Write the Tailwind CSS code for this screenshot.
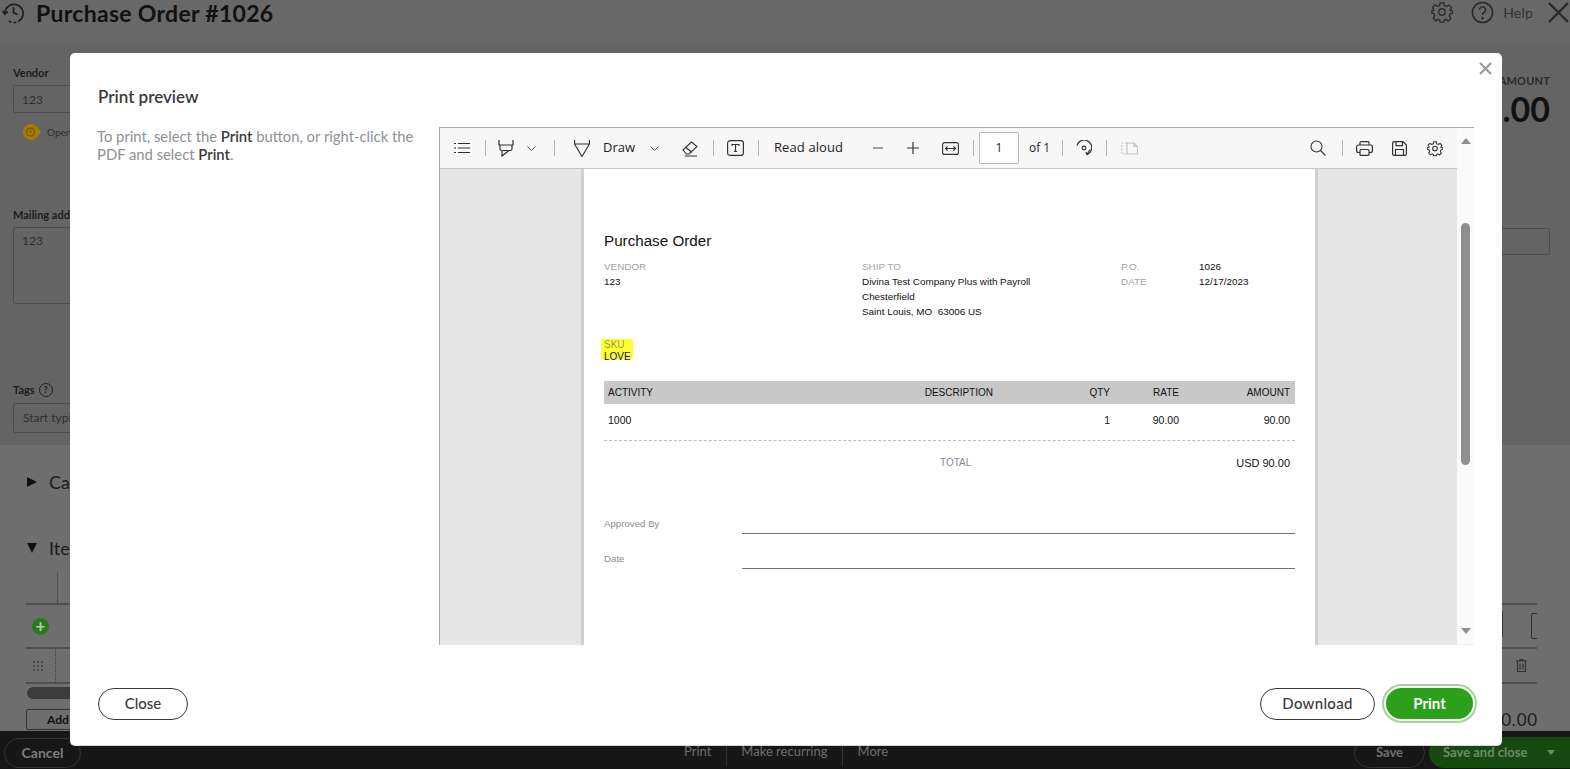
<!DOCTYPE html>
<html lang="en">
<head>
  <meta charset="UTF-8">
  <script src="https://cdn.jsdelivr.net/npm/@tailwindcss/browser@4"></script>
  <title>Print preview</title>
</head>
<body class="w-[1570px] h-[769px] overflow-hidden relative bg-[#646464] font-['Lato',sans-serif]">

  <!-- page behind the dialog (already dimmed) -->
  <div class="h-[769px] flex flex-col">
    <header class="h-[44px] shrink-0 bg-[#686868] flex items-center">
      <svg class="ml-[2px] mt-[-20px] w-[23px] h-[23px]" viewBox="0 0 24 24" fill="none" stroke="#1d1d1d" stroke-width="1.8"><path d="M3 13a9.500 9.500 0 1 1 4 7.700" stroke-dasharray="40 2 3 2 3"/><path d="M12 6.500V12l4 2"/><path d="M0.500 10.500 3 13.500l3-2.500"/></svg>
      <h1 class="ml-[11px] mt-[-19px] text-[23px] leading-[26px] font-bold text-[#111] tracking-[0.3px]">Purchase Order #1026</h1>
      <div class="ml-auto mt-[-20px] flex items-center">
        <svg class="w-[22px] h-[22px]" viewBox="0 0 24 24" fill="none" stroke="#2a2a2a" stroke-width="1.500"><circle cx="12" cy="12" r="3.500"/><path d="M10 2h4l.6 3 2.400 1 2.600-1.600 2.800 2.800L20.800 10l.2 .5 3 .6v2l-3 .9-1 2.400 1.600 2.600-2.800 2.800L16.200 20l-1.600.7L14 23h-4l-.6-2.300-1.600-.7-2.600 1.600-2.800-2.800L4 16.200l-1-2.400-3-.9v-2l3-.6.2-.5-1.600-2.800 2.800-2.800L7 5.800 9.400 5z"/></svg>
        <svg class="ml-[18px] w-[23px] h-[23px]" viewBox="0 0 24 24" fill="none" stroke="#2a2a2a" stroke-width="1.600"><circle cx="12" cy="12" r="10.500"/><path d="M8.800 9.200a3.200 3.200 0 1 1 4.800 2.800c-1 .6-1.600 1.200-1.600 2.500"/><circle cx="12" cy="18" r=".6" fill="#2a2a2a"/></svg>
        <span class="ml-[9px] text-[14px] text-[#333] tracking-[0.2px]">Help</span>
        <svg class="ml-[15px] mr-[1px] w-[21px] h-[21px]" viewBox="0 0 21 21" stroke="#2a2a2a" stroke-width="2.400"><path d="M1 1l19 19M20 1 1 20"/></svg>
      </div>
    </header>

    <section class="h-[401px] shrink-0 bg-[#646464] flex justify-between">
      <div class="w-[300px] pl-[13px] pt-[22px] text-[11px] text-[#1c1c1c]">
        <div class="font-bold leading-[14px]">Vendor</div>
        <div class="mt-[5px] h-[28px] border border-[#4e4e4e] rounded-[2px] pl-[8px] text-[12px] leading-[28px] text-[#2e2e2e]">123</div>
        <div class="mt-[9px] ml-[9px] flex items-center h-[20px]">
          <svg class="w-[20px] h-[18px]" viewBox="0 0 20 18"><path d="M9 1a8 8 0 0 1 5.500 2.200L19 9l-4.500 5.800A8 8 0 1 1 9 1z" fill="#a67c00"/><circle cx="8.500" cy="9" r="4" fill="none" stroke="#6b5208" stroke-width="1.200"/><path d="M8.500 6.500V9l1.500 1" fill="none" stroke="#6b5208"/></svg>
          <span class="ml-[5px] text-[10px] text-[#2c2c2c]">Open</span>
        </div>
        <div class="mt-[66px] font-bold leading-[14px]">Mailing address</div>
        <div class="mt-[5px] h-[77px] border border-[#4e4e4e] rounded-[2px] pl-[8px] pt-[4px] text-[12px] text-[#2e2e2e]">123</div>
        <div class="mt-[79px] flex items-center font-bold leading-[14px]">Tags
          <span class="ml-[4px] w-[14px] h-[14px] rounded-full border border-[#222] text-[9px] leading-[12px] text-center">?</span>
        </div>
        <div class="mt-[6px] h-[30px] border border-[#4e4e4e] rounded-[2px] pl-[9px] text-[12px] leading-[28px] text-[#2e2e2e]">Start typing</div>
      </div>
      <div class="w-[220px] flex flex-col items-end pr-[20px] pt-[30px]">
        <div class="text-[11px] font-bold leading-[14px] text-[#2b2b2b] tracking-[0.2px]">AMOUNT</div>
        <div class="mt-[1px] text-[34px] leading-[40px] font-bold text-[#111]">$90.00</div>
        <div class="mt-[99px] w-[200px] h-[27px] border border-[#4e4e4e] rounded-[2px]"></div>
      </div>
    </section>

    <section class="h-[286px] shrink-0 bg-[#6e6e6e] pl-[27px] relative">
      <div class="pt-[27px] flex items-center text-[18px] leading-[20px] text-[#1c1c1c]">
        <span class="w-0 h-0 border-y-[5px] border-y-transparent border-l-[10px] border-l-[#111]"></span>
        <span class="ml-[12px]">Category details</span>
      </div>
      <div class="mt-[46px] flex items-center text-[18px] leading-[20px] text-[#1c1c1c]">
        <span class="w-0 h-0 border-x-[5px] border-x-transparent border-t-[10px] border-t-[#111]"></span>
        <span class="ml-[12px]">Item details</span>
      </div>
      <div class="mt-[14px] ml-[30px] w-px h-[31px] bg-[#4f4f4f]"></div>
      <div class="ml-[-1px] w-[1511px] h-[46px] border-y-2 border-[#4f4f4f] flex items-center">
        <span class="ml-[6px] w-[17px] h-[17px] rounded-full bg-[#2a7a20] text-[#b8c8b5] text-center font-bold text-[17px] leading-[16px]">+</span>
        <span class="ml-auto w-[6px] h-[26px] border border-r-0 border-[#333] rounded-l-[2px]"></span>
      </div>
      <div class="ml-[-1px] w-[1511px] h-[35px] border-b-2 border-[#4f4f4f] flex items-center">
        <svg class="ml-[7px] w-[10px] h-[10px]" viewBox="0 0 10 10" fill="#4c4c4c"><path d="M0 0h2v2H0zM4 0h2v2H4zM8 0h2v2H8zM0 4h2v2H0zM4 4h2v2H4zM8 4h2v2H8zM0 8h2v2H0zM4 8h2v2H4zM8 8h2v2H8z"/></svg>
        <span class="ml-[12px] h-full border-l border-dotted border-[#3e3e3e]"></span>
        <svg class="ml-auto mr-[10px] w-[11px] h-[13px]" viewBox="0 0 11 13" fill="none" stroke="#333" stroke-width="1.200"><path d="M0 2h11M4 2V.6h3V2M1.500 2v10.500h8V2M4 4.500v6M7 4.500v6"/></svg>
      </div>
      <div class="mt-[3px] w-[200px] h-[12px] rounded-full bg-[#3c3c3c]"></div>
      <div class="mt-[10px] ml-[-1px] flex justify-between pr-[32px]">
        <span class="w-[120px] h-[21px] border border-[#333] rounded-[2px] pl-[20px] text-[12px] font-bold leading-[19px] text-[#111]">Add lines</span>
        <span class="text-[17px] leading-[21px] text-[#1c1c1c] tracking-[0.8px]">$90.00</span>
      </div>
      <div class="absolute right-[67px] top-[166px] w-px h-[26px] bg-[#333]"></div>
    </section>

    <footer class="h-[38px] shrink-0 bg-[#171717] flex relative text-[13px]">
      <span class="ml-[4px] mt-[7px] w-[77px] h-[30px] rounded-full border border-[#333] text-center text-[14px] font-bold leading-[28px] text-[#7d7d7d]">Cancel</span>
      <div class="ml-[603px] flex h-[35px] text-[#6f6f6f]">
        <span class="pr-[15px] leading-[40px] border-r border-[#333]">Print</span>
        <span class="px-[14px] leading-[40px] border-r border-[#333]">Make recurring</span>
        <span class="pl-[15px] leading-[40px]">More</span>
      </div>
      <span class="ml-auto mt-[6px] w-[71px] h-[31px] rounded-full border border-[#333] text-center text-[13px] font-bold leading-[29px] text-[#6f6f6f]">Save</span>
      <span class="ml-[4px] mt-[6px] w-[141px] h-[31px] rounded-l-full bg-[#174a10] flex items-center pl-[14px] text-[13px] font-bold text-[#6d8a68]">Save and close
        <span class="ml-[20px] w-0 h-0 border-x-[4px] border-x-transparent border-t-[5px] border-t-[#6d8a68]"></span>
      </span>
    </footer>
  </div>

  <!-- dialog -->
  <div class="absolute left-[70px] top-[53px] w-[1432px] h-[693px] bg-white rounded-[5px] border-b border-[#d4d7dc] flex flex-col">
    <svg class="absolute right-[10px] top-[9px] w-[13px] h-[13px]" viewBox="0 0 13 13" stroke="#9a9a9a" stroke-width="2.200"><path d="M1 1l11 11M12 1 1 12"/></svg>
    <h2 class="pl-[28px] pt-[33px] text-[17px] leading-[22px] font-semibold text-[#393a3d]">Print preview</h2>
    <div class="mt-[19px] flex h-[518px]">
      <p class="ml-[27px] w-[323px] text-[14.800px] leading-[18px] text-[#8d9096]">To print, select the <b class="font-semibold text-[#393a3d]">Print</b> button, or right-click the PDF and select <b class="font-semibold text-[#393a3d]">Print</b>.</p>

      <!-- pdf viewer -->
      <div class="ml-[19px] w-[1035px] h-[518px] border-t border-l border-[#a9a9a9] border-r-0 flex font-['Liberation_Sans',sans-serif]">
        <div class="w-[1018px] flex flex-col">
          <div class="h-[41px] shrink-0 bg-[#f7f7f7] border-b border-[#c4c4c4] flex items-center text-[13px] text-[#1f1f1f] font-['Open_Sans',sans-serif]">
            <svg class="ml-[13px] w-[18px] h-[12px]" viewBox="0 0 18 12" stroke="#333" stroke-width="1.200"><path d="M5 1.500h12M5 6h12M5 10.500h12M1 1.500h2M1 6h2M1 10.500h2"/></svg>
            <span class="ml-[14px] w-px h-[16px] bg-[#b5b5b5]"></span>
            <svg class="ml-[12px] w-[16px] h-[17px]" viewBox="0 0 16 17" fill="none" stroke="#333" stroke-width="1.200"><path d="M1 0v5h14V0M2 5v4c0 1 1 1.500 2 1.500h8c1 0 2-.5 2-1.500V5M4 10.500V16l7-5.500"/></svg>
            <svg class="ml-[13px] w-[9px] h-[5px]" viewBox="0 0 9 5" fill="none" stroke="#555"><path d="M.5.500 4.500 4.500 8.500.500"/></svg>
            <span class="ml-[18px] w-px h-[16px] bg-[#b5b5b5]"></span>
            <svg class="ml-[19px] w-[16px] h-[17px]" viewBox="0 0 16 17" fill="none" stroke="#333" stroke-width="1.100"><path d="M.6 0v4L8 16.500 15.400 4V0M.6 4h14.800"/></svg>
            <span class="ml-[13px] w-[31px]">Draw</span>
            <svg class="ml-[16px] w-[9px] h-[5px]" viewBox="0 0 9 5" fill="none" stroke="#555"><path d="M.5.500 4.500 4.500 8.500.500"/></svg>
            <svg class="ml-[23px] w-[16px] h-[17px]" viewBox="0 0 16 17" fill="none" stroke="#333" stroke-width="1.100"><path d="M1 10 9.500 2 15 6.500 7 14H4.500zM4 7.500 10 12.500M3 16h12"/></svg>
            <span class="ml-[15px] w-px h-[16px] bg-[#b5b5b5]"></span>
            <svg class="ml-[13px] w-[17px] h-[16px]" viewBox="0 0 17 16" fill="none" stroke="#333" stroke-width="1.200"><rect x=".6" y=".6" width="15.800" height="14.800" rx="2.500"/><path d="M5 6V4.500h7V6M8.500 4.500v7M7 11.500h3"/></svg>
            <span class="ml-[14px] w-px h-[16px] bg-[#b5b5b5]"></span>
            <span class="ml-[15px] w-[69px] whitespace-nowrap tracking-[0.1px]">Read aloud</span>
            <svg class="ml-[30px] w-[10px] h-[2px]" viewBox="0 0 10 2" stroke="#777" stroke-width="1.400"><path d="M0 1h10"/></svg>
            <svg class="ml-[24px] w-[12px] h-[12px]" viewBox="0 0 12 12" stroke="#333" stroke-width="1.200"><path d="M0 6h12M6 0v12"/></svg>
            <svg class="ml-[23px] w-[17px] h-[13px]" viewBox="0 0 17 13" fill="none" stroke="#333" stroke-width="1.100"><rect x=".6" y=".6" width="15.800" height="11.800" rx="2"/><path d="M3.500 6.500h10M5.500 4.500l-2 2 2 2M11.500 4.500l2 2-2 2"/></svg>
            <span class="ml-[14px] w-px h-[16px] bg-[#b5b5b5]"></span>
            <span class="ml-[5px] w-[40px] h-[32px] bg-white border border-[#bcbcbc] rounded-[2px] text-center text-[12px] leading-[30px]">1</span>
            <span class="ml-[10px] w-[20px] text-[12px] whitespace-nowrap">of 1</span>
            <span class="ml-[13px] w-px h-[16px] bg-[#b5b5b5]"></span>
            <svg class="ml-[13px] w-[16px] h-[17px]" viewBox="0 0 16 17" fill="none" stroke="#333" stroke-width="1.200"><path d="M1 5.500A7.500 7.500 0 1 1 11 14.500"/><path d="M14 9.500 11 14.500l-1-2.500"/><circle cx="8" cy="8" r="1.800"/></svg>
            <span class="ml-[14px] w-px h-[16px] bg-[#b5b5b5]"></span>
            <svg class="ml-[14px] w-[17px] h-[13px]" viewBox="0 0 17 13" fill="none" stroke="#c2c2c2" stroke-width="1.100"><path d="M6 1H1v11h5" stroke-dasharray="2 1.500"/><path d="M6 1h7l3.500 3.500V12H6zM13 1v3.500h3.500"/></svg>
            <svg class="ml-[172px] w-[16px] h-[16px]" viewBox="0 0 16 16" fill="none" stroke="#333" stroke-width="1.100"><circle cx="6.500" cy="6.500" r="5.500"/><path d="M10.500 10.500 15.500 15.500"/></svg>
            <span class="ml-[16px] w-px h-[16px] bg-[#b5b5b5]"></span>
            <svg class="ml-[13px] w-[17px] h-[15px]" viewBox="0 0 17 15" fill="none" stroke="#333" stroke-width="1.200"><path d="M4 4V1.500C4 1 4.500.6 5 .6h7c.5 0 1 .4 1 .9V4M4 11.500H2.500C1.500 11.500.6 10.800.6 9.500V6C.6 4.800 1.500 4 2.500 4h12c1 0 1.900.8 1.900 2v3.500c0 1.300-.9 2-1.900 2H13"/><rect x="4" y="8.500" width="9" height="5.900" rx="1"/></svg>
            <svg class="ml-[19px] w-[15px] h-[15px]" viewBox="0 0 15 15" fill="none" stroke="#333" stroke-width="1.200"><path d="M2 .6h9L14.400 4v9c0 .8-.6 1.400-1.400 1.400H2c-.8 0-1.400-.6-1.400-1.400V2C.6 1.200 1.200.6 2 .6zM4 .6v4h6.500v-4M3.500 14.400V8.500h8v5.900"/></svg>
            <svg class="ml-[20px] w-[16px] h-[17px]" viewBox="0 0 24 24" fill="none" stroke="#333" stroke-width="1.600"><circle cx="12" cy="12" r="3.500"/><path d="M10 2h4l.6 3 2.400 1 2.600-1.600 2.800 2.800L20.800 10l.2 .5 3 .6v2l-3 .9-1 2.400 1.600 2.600-2.800 2.800L16.200 20l-1.600.7L14 23h-4l-.6-2.300-1.600-.7-2.600 1.600-2.800-2.800L4 16.200l-1-2.400-3-.9v-2l3-.6.2-.5-1.600-2.800 2.800-2.800L7 5.800 9.400 5z"/></svg>
          </div>

          <div class="flex-1 bg-[#e6e6e6] pl-[141px] overflow-hidden">
            <div class="w-[737px] h-full bg-white border-x-[3px] border-[#cfcfcf] pl-[20px] pr-[20px] text-[10px] text-[#111]">
              <div class="pt-[63px] text-[15.200px] leading-[18px]">Purchase Order</div>
              <div class="mt-[9px] grid grid-cols-[258px_259px_78px_1fr] leading-[15px] text-[9.900px]">
                <div><div class="text-[#a0a4aa]">VENDOR</div><div>123</div></div>
                <div><div class="text-[#a0a4aa]">SHIP TO</div><div>Divina Test Company Plus with Payroll</div><div>Chesterfield</div><div>Saint Louis, MO&nbsp; 63006 US</div></div>
                <div><div class="text-[#a0a4aa]">P.O.</div><div class="text-[#a0a4aa]">DATE</div></div>
                <div><div>1026</div><div>12/17/2023</div></div>
              </div>
              <div class="mt-[20px] ml-[-3px] w-[32px] h-[20px] bg-[#ffff33] pl-[3px] leading-[12px] rounded-[1px]">
                <div class="text-[#9a9a58]">SKU</div><div>LOVE</div>
              </div>
              <div class="mt-[22px] h-[23px] bg-[#c8c8c8] grid grid-cols-[300px_85px_117px_69px_1fr] items-center pl-[4px] pr-[5px] leading-[12px]">
                <span>ACTIVITY</span><span class="text-right">DESCRIPTION</span><span class="text-right">QTY</span><span class="text-right">RATE</span><span class="text-right">AMOUNT</span>
              </div>
              <div class="h-[37px] pb-[2px] border-b border-dashed border-[#bdbdbd] grid grid-cols-[300px_85px_117px_69px_1fr] items-center pl-[4px] pr-[5px] text-[10.500px]">
                <span>1000</span><span></span><span class="text-right">1</span><span class="text-right">90.00</span><span class="text-right">90.00</span>
              </div>
              <div class="mt-[15px] flex items-center justify-between pr-[5px] leading-[14px] text-[11px]">
                <span class="ml-[336px] text-[#7e8a98] text-[10px]">TOTAL</span>
                <span class="font-medium">USD 90.00</span>
              </div>
              <div class="mt-[42px] flex items-end h-[22px] text-[#8e8e8e] text-[9.700px]">
                <span class="w-[138px] pb-[2px]">Approved By</span><span class="flex-1 border-b border-[#6f6f6f]"></span>
              </div>
              <div class="mt-[13px] flex items-end h-[22px] text-[#8e8e8e] text-[9.700px]">
                <span class="w-[138px] pb-[2px]">Date</span><span class="flex-1 border-b border-[#6f6f6f]"></span>
              </div>
            </div>
          </div>
        </div>

        <!-- scrollbar -->
        <div class="w-[17px] bg-[#fafafa] flex flex-col items-center pt-[10px] border-b border-[#efefef]">
          <span class="w-0 h-0 border-x-[5px] border-x-transparent border-b-[6px] border-b-[#8f8f8f]"></span>
          <span class="mt-[79px] w-[9px] h-[242px] rounded-full bg-[#8f8f8f]"></span>
          <span class="mt-auto mb-[10px] w-0 h-0 border-x-[5px] border-x-transparent border-t-[6px] border-t-[#8f8f8f]"></span>
        </div>
      </div>
    </div>

    <div class="mt-[41px] px-[28px] flex items-center text-[15px] text-[#393a3d]">
      <button class="w-[90px] h-[32px] rounded-full border border-[#393a3d] font-medium">Close</button>
      <button class="ml-auto w-[115px] h-[32px] rounded-full border border-[#393a3d] font-medium tracking-[0.3px]">Download</button>
      <button class="ml-[9px] w-[91px] h-[35px] rounded-full bg-[#2ca01c] border-2 border-white ring-2 ring-[#a4d49c] text-white font-bold mr-[-1px]">Print</button>
    </div>
  </div>
</body>
</html>
